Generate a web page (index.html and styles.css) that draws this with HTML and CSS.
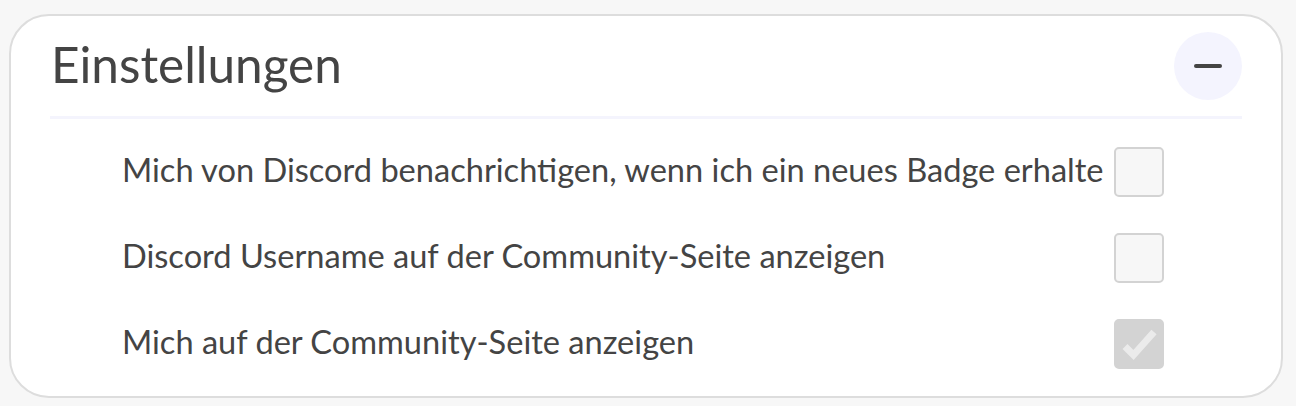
FILE: index.html
```html
<!DOCTYPE html>
<html lang="de">
<head>
<meta charset="utf-8">
<title>Einstellungen</title>
<link rel="stylesheet" href="styles.css">
</head>
<body>
<section class="card">
  <header class="card-header">
    <h2 class="card-title">Einstellungen</h2>
    <button class="collapse-btn" type="button" aria-label="Einklappen"><span class="minus"></span></button>
  </header>
  <div class="settings">
    <label class="setting">
      <span class="setting-label">Mich von Discord benachrichtigen, wenn ich ein neues Badge erhalte</span>
      <span class="checkbox"></span>
    </label>
    <label class="setting">
      <span class="setting-label">Discord Username auf der Community-Seite anzeigen</span>
      <span class="checkbox"></span>
    </label>
    <label class="setting">
      <span class="setting-label">Mich auf der Community-Seite anzeigen</span>
      <span class="checkbox checked">
        <svg viewBox="0 0 50 50" width="50" height="50" aria-hidden="true"><path d="M11 27.5 L19.5 36 L40 13" fill="none" stroke="#ebebeb" stroke-width="7" stroke-linecap="butt" stroke-linejoin="miter"/></svg>
      </span>
    </label>
  </div>
</section>
</body>
</html>
```
FILE: styles.css
```css
html, body {
  margin: 0;
  padding: 0;
}
body {
  background: #f7f7f7;
  padding: 14px 13px 9px 9px;
  font-family: "Lato", "Noto Sans", sans-serif;
  color: #444;
}
.card {
  background: #fff;
  border: 2px solid #dddddd;
  border-radius: 40px;
  padding: 0 39px 27px 39px;
}
.card-header {
  display: flex;
  align-items: center;
  justify-content: space-between;
  padding: 16px 0 16px 1px;
  border-bottom: 3px solid #f4f4fd;
}
.card-title {
  margin: 0;
  font-weight: 400;
  font-size: 49.5px;
  line-height: 64px;
  padding-bottom: 4px;
  color: #444;
}
.collapse-btn {
  width: 68px;
  height: 68px;
  border: none;
  border-radius: 50%;
  background: #f4f4fe;
  padding: 0;
  display: flex;
  align-items: center;
  justify-content: center;
  cursor: pointer;
}
.minus {
  display: block;
  width: 28px;
  height: 4px;
  border-radius: 2px;
  background: #444;
}
.settings {
  display: flex;
  flex-direction: column;
  gap: 36px;
  padding: 28px 78px 0 72px;
}
.setting {
  display: flex;
  align-items: center;
  justify-content: space-between;
  height: 50px;
}
.setting-label {
  font-size: 32.6px;
  line-height: 40px;
  padding-bottom: 4px;
  color: #444;
}
.checkbox {
  box-sizing: border-box;
  width: 50px;
  height: 50px;
  border: 2px solid #d3d3d3;
  border-radius: 5px;
  background: #f7f7f7;
  display: flex;
  align-items: center;
  justify-content: center;
}
.checkbox.checked {
  background: #d3d3d3;
  border-color: #d3d3d3;
}
.checkbox svg {
  display: block;
  flex: none;
}
```
